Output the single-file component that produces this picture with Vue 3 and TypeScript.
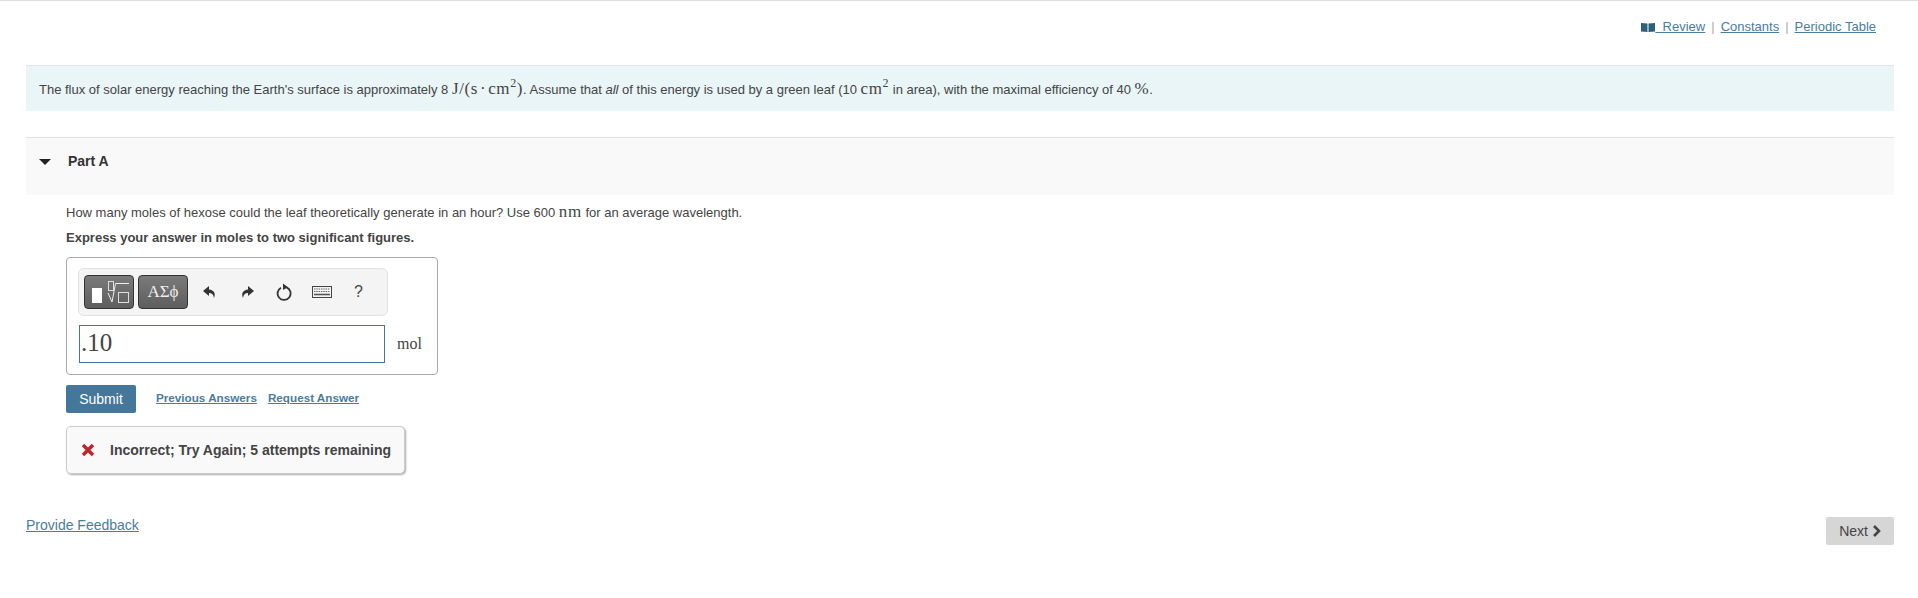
<template>
  <div class="page">
    <nav class="top-links">
      <a class="link" href="#">
        <svg class="book" viewBox="0 0 14 10" width="14" height="10">
          <path d="M0 1l6.500 0.500V10L0 9.500zM14 1l-6.500 0.500V10l6.500-0.500z" fill="#2f5f7a" />
        </svg>
        &nbsp;Review</a>
      <span class="sep">|</span>
      <a class="link" href="#">Constants</a>
      <span class="sep">|</span>
      <a class="link" href="#">Periodic Table</a>
    </nav>

    <section class="intro">
      The flux of solar energy reaching the Earth's surface is approximately 8
      <span class="math big">J/(s<span class="dot">·</span>cm<sup>2</sup>)</span>. Assume that <em>all</em> of this energy is used by a
      green leaf (10 <span class="math big">cm<sup>2</sup></span> in area), with the maximal efficiency of 40 <span class="math big">%</span>.
    </section>

    <section class="part-head">
      <span class="caret"></span>
      <h2>Part A</h2>
    </section>

    <section class="part-body">
      <p class="question">
        How many moles of hexose could the leaf theoretically generate in an hour? Use 600
        <span class="math big">nm</span> for an average wavelength.
      </p>
      <p class="express">Express your answer in moles to two significant figures.</p>

      <div class="answer-box">
        <div class="toolbar">
          <button class="tpl">
            <svg viewBox="0 0 48 32" width="48" height="32">
              <rect x="7" y="12" width="10" height="15" fill="#fff" />
              <rect x="23.500" y="5.500" width="5" height="9" fill="none" stroke="#ddd" />
              <path d="M23 17l4 9 3.500-18.500H44" fill="none" stroke="#eee" />
              <rect x="33.500" y="16.500" width="10" height="10" fill="none" stroke="#ddd" />
            </svg>
          </button>
          <button class="tpl greek">ΑΣϕ</button>
          <svg class="tool undo" viewBox="0 0 16 16" width="16" height="16">
            <path d="M7 2L1 7l6 5V9c3 0 4.500 1.500 5 5 2-4.500 0-8-5-8.500z" fill="#333" />
          </svg>
          <svg class="tool redo" viewBox="0 0 16 16" width="16" height="16">
            <path d="M9 2l6 5-6 5V9c-3 0-4.500 1.500-5 5-2-4.500 0-8 5-8.500z" fill="#333" />
          </svg>
          <svg class="tool reset" viewBox="0 0 18 18" width="18" height="18">
            <path d="M11.500 4.400A6.500 6.500 0 1 1 6 4.700" fill="none" stroke="#333" stroke-width="1.800" />
            <path d="M8 0.500l5 3.800-5 2.700z" fill="#333" />
          </svg>
          <svg class="tool keys" viewBox="0 0 20 12" width="20" height="12">
            <rect x="0.500" y="0.500" width="19" height="11" fill="#f4f4f4" stroke="#444" />
            <path d="M2 3h16M2 5.500h16" stroke="#666" stroke-width="1.200" stroke-dasharray="1.500 0.800" />
            <path d="M2 8.500h16" stroke="#555" stroke-width="1.600" />
          </svg>
          <span class="help">?</span>
        </div>
        <div class="input-row">
          <div class="math-input">.10</div>
          <span class="unit">mol</span>
        </div>
      </div>

      <div class="actions">
        <button class="submit">Submit</button>
        <a class="link small" href="#">Previous Answers</a>
        <a class="link small" href="#">Request Answer</a>
      </div>

      <div class="feedback">
        <svg class="cross" viewBox="0 0 14 14" width="14" height="14">
          <path d="M3.200 0.800L7 4.600 10.800 0.800 13.200 3.200 9.400 7l3.800 3.800-2.400 2.400L7 9.400l-3.800 3.800-2.400-2.400L4.600 7 0.800 3.200z" fill="#c4232c" />
        </svg>
        <span>Incorrect; Try Again; 5 attempts remaining</span>
      </div>
    </section>

    <footer class="bottom">
      <a class="link provide" href="#">Provide Feedback</a>
      <button class="next">
        Next
        <svg viewBox="0 0 9 12" width="9" height="12">
          <path d="M2 1l5 5-5 5" fill="none" stroke="#444" stroke-width="2.600" />
        </svg>
      </button>
    </footer>
  </div>
</template>

<script setup lang="ts">
</script>

<style>
html, body { background: #fff; }
</style>

<style scoped>
.page {
  height: 598px;
  box-sizing: border-box;
  border-top: 1px solid #e0e0e0;
  padding: 0 24px 0 26px;
  font-family: "Liberation Sans", Arial, sans-serif;
  color: #444;
  font-size: 13px;
}
.link { color: #4a7c9e; text-decoration: underline; }
.top-links {
  display: flex;
  justify-content: flex-end;
  align-items: center;
  height: 50px;
  padding-right: 18px;
  gap: 5px;
  font-size: 13px;
}
.book { vertical-align: -1px; }
.sep { color: #aaa; padding: 0 1px; }
.intro {
  margin-top: 14px;
  height: 45px;
  line-height: 45px;
  border-top: 1px solid #dfe3e3;
  background: #e9f5f6;
  padding-left: 13px;
  white-space: nowrap;
}
.math { font-family: "Liberation Serif", serif; }
.big { font-size: 17px; letter-spacing: 0.6px; }
.big sup { font-size: 12px; line-height: 0; }
.dot { padding: 0 2px; }
.part-head {
  margin-top: 26px;
  height: 58px;
  border-top: 1px solid #e0e0e0;
  background: #f9f9f9;
  display: flex;
  align-items: flex-start;
  padding: 16px 0 0 13px;
  box-sizing: border-box;
}
.caret {
  width: 0;
  height: 0;
  margin-top: 5px;
  border-left: 6px solid transparent;
  border-right: 6px solid transparent;
  border-top: 6px solid #222;
}
.part-head h2 {
  margin: 0 0 0 17px;
  font-size: 14px;
  line-height: 15px;
  font-weight: bold;
  color: #333;
}
.part-body { padding-left: 40px; }
.question { margin: 9px 0 0; line-height: 15px; }
.express { margin: 10px 0 0; line-height: 15px; font-weight: bold; }
.answer-box {
  margin-top: 12px;
  width: 372px;
  height: 118px;
  box-sizing: border-box;
  border: 1px solid #aaa;
  border-radius: 4px;
  padding: 10px 11px;
}
.toolbar {
  width: 310px;
  height: 48px;
  box-sizing: border-box;
  background: #f4f4f4;
  border: 1px solid #e2e2e2;
  border-radius: 6px;
  display: flex;
  align-items: center;
  padding: 0 5px;
}
.tpl {
  width: 50px;
  height: 34px;
  padding: 0;
  margin-right: 4px;
  border: 1px solid #333;
  border-radius: 4px;
  background: linear-gradient(#7a7a7a, #5e5e5e);
  color: #eee;
  display: flex;
  align-items: center;
  justify-content: center;
}
.greek { font-family: "Liberation Serif", serif; font-size: 17px; }
.tool { flex: none; }
.undo { margin-left: 10px; }
.redo { margin-left: 21px; }
.reset { margin-left: 20px; }
.keys { margin-left: 19px; }
.help { margin-left: 22px; font-size: 16px; color: #444; }
.input-row { display: flex; align-items: center; margin-top: 9px; margin-left: 1px; }
.math-input {
  width: 306px;
  height: 38px;
  box-sizing: border-box;
  border: 1px solid #44779a;
  font-family: "Liberation Serif", serif;
  font-size: 25px;
  line-height: 34px;
  padding-left: 1px;
  color: #444;
}
.unit { margin-left: 12px; font-family: "Liberation Serif", serif; font-size: 16px; color: #444; }
.actions { display: flex; align-items: center; margin-top: 10px; height: 28px; }
.submit {
  width: 70px;
  height: 28px;
  border: 0;
  padding: 0;
  border-radius: 2px;
  background: #44779a;
  color: #fff;
  font: 14px "Liberation Sans", Arial, sans-serif;
}
.small { font-size: 11.700px; font-weight: bold; margin-left: 11px; position: relative; top: -2px; }
.submit + .small { margin-left: 20px; }
.feedback {
  margin-top: 13px;
  width: 339px;
  height: 48px;
  box-sizing: border-box;
  border: 1px solid #ccc;
  border-radius: 5px;
  background: #f9f9f9;
  box-shadow: 1px 1px 2px #aaa;
  display: flex;
  align-items: center;
  padding-left: 14px;
  font-size: 14px;
  font-weight: bold;
}
.cross { margin-right: 15px; }
.bottom {
  display: flex;
  justify-content: space-between;
  align-items: flex-start;
  margin-top: 43px;
}
.provide { font-size: 14px; line-height: 16px; }
.next {
  width: 68px;
  height: 28px;
  padding: 0;
  border: 0;
  border-radius: 2px;
  background: #d6d6d6;
  color: #444;
  font: 14px "Liberation Sans", Arial, sans-serif;
}
.next svg { vertical-align: -1px; }
</style>
